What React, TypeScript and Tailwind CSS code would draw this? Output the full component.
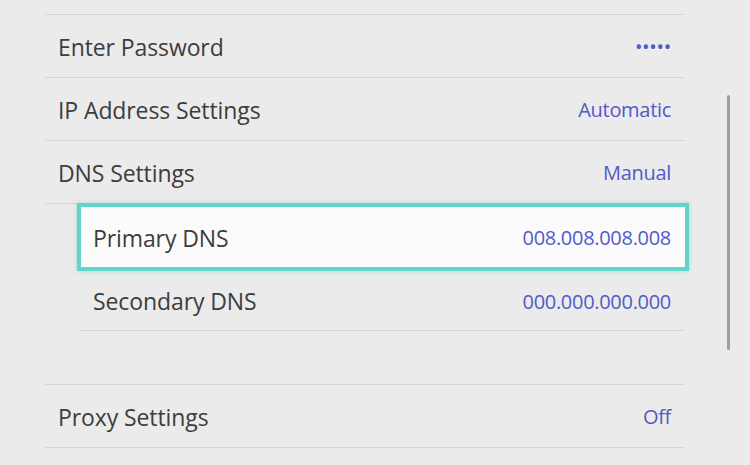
import React from 'react';

const font = { fontFamily: '"Open Sans", "Noto Sans", sans-serif' };

function Row({ label, value }: { label: string; value: string }) {
  return (
    <div className="flex h-[63px] items-center justify-between border-b border-[#d4d4d4] pl-[13px] pr-[13px] pt-[2px]">
      <span className="text-[23px] text-[#3d3d3d] tracking-[-0.1px]">{label}</span>
      <span className="text-[20px] text-[#5459c9] tracking-[-0.3px]">{value}</span>
    </div>
  );
}

export default function App() {
  return (
    <div className="relative h-[465px] w-[750px] overflow-hidden bg-[#ebebeb]" style={font}>
      <div className="ml-[45px] w-[639px] pt-[14px]">
        <div className="border-t border-[#d4d4d4]">
          <Row label="Enter Password" value="•••••" />
          <Row label="IP Address Settings" value="Automatic" />
          <Row label="DNS Settings" value="Manual" />
        </div>

        <div className="ml-[35px] w-[604px]">
          <div className="-mt-[1px] ml-[-3px] mr-[-5px] flex h-[68px] items-center justify-between border-[4px] border-[#62d4ca] bg-[#fbfbfb] pl-[12px] pr-[14px] pt-[2px] shadow-[0_0_4px_rgba(98,212,202,0.6)]">
            <span className="text-[23px] text-[#3d3d3d] tracking-[-0.1px]">Primary DNS</span>
            <span className="text-[20px] text-[#5459c9] tracking-[-0.3px]">008.008.008.008</span>
          </div>
          <div className="flex h-[60px] items-center justify-between border-b border-[#d4d4d4] pl-[13px] pr-[13px] pt-[2px]">
            <span className="text-[23px] text-[#3d3d3d] tracking-[-0.1px]">Secondary DNS</span>
            <span className="text-[20px] text-[#5459c9] tracking-[-0.3px]">000.000.000.000</span>
          </div>
        </div>

        <div className="h-[53px]" />

        <div className="border-t border-[#d4d4d4]">
          <Row label="Proxy Settings" value="Off" />
        </div>
      </div>

      <div className="absolute left-[727px] top-[95px] h-[255px] w-[3px] rounded-full bg-[#9e9e9e]" />
    </div>
  );
}
